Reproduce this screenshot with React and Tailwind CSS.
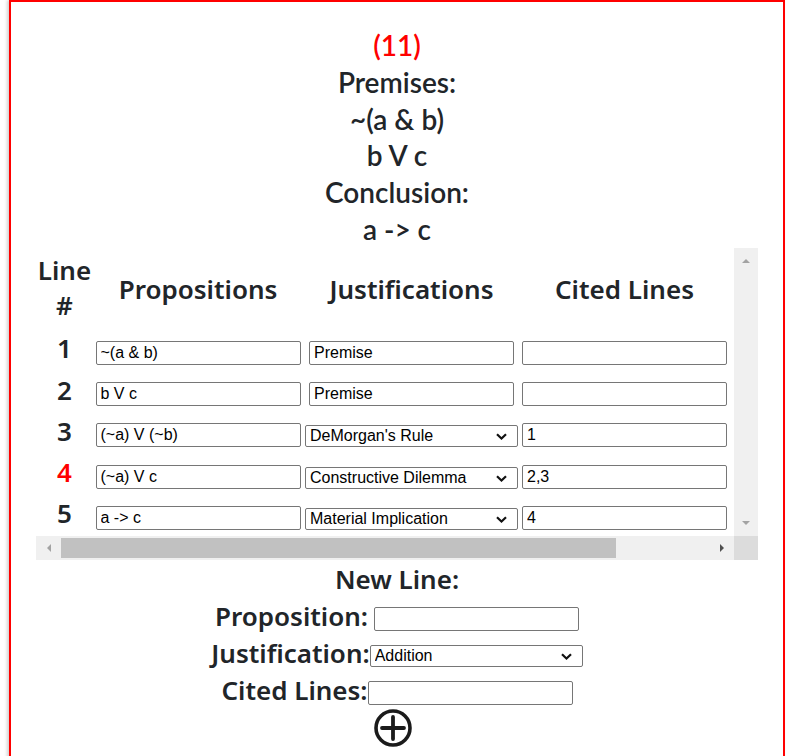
import React from "react";

const rows = [
  { n: "1", prop: "~(a & b)", just: "Premise", cited: "", select: false },
  { n: "2", prop: "b V c", just: "Premise", cited: "", select: false },
  { n: "3", prop: "(~a) V (~b)", just: "DeMorgan's Rule", cited: "1", select: true },
  { n: "4", prop: "(~a) V c", just: "Constructive Dilemma", cited: "2,3", select: true, red: true },
  { n: "5", prop: "a -> c", just: "Material Implication", cited: "4", select: true },
];

const rules = [
  "Premise",
  "Addition",
  "DeMorgan's Rule",
  "Constructive Dilemma",
  "Material Implication",
];

const inputCls =
  "w-[205px] h-[24px] px-[4px] border border-[#767676] rounded-[2px] bg-white text-[16px] font-normal text-black font-['Liberation_Sans',Arial,sans-serif]";

// native-looking select with the chevron drawn on top
const RuleSelect = ({ value }) => (
  <span className="relative inline-flex align-middle">
    <select
      className="appearance-none w-[213px] h-[22px] pl-[4px] pr-[24px] border border-[#767676] rounded-[2px] bg-white text-[16px] leading-[20px] font-normal text-black font-['Liberation_Sans',Arial,sans-serif]"
      defaultValue={value}
    >
      {rules.map((x) => (
        <option key={x}>{x}</option>
      ))}
    </select>
    <svg
      className="pointer-events-none absolute right-[11px] top-[8px]"
      width="11"
      height="7"
      viewBox="0 0 11 7"
      fill="none"
      stroke="#111"
      strokeWidth="2.2"
    >
      <path d="M1 1.2l4.5 4.3L10 1.2" />
    </svg>
  </span>
);

const PlusCircle = () => (
  <svg width="38" height="38" viewBox="0 0 38 38" fill="none" stroke="#1b1b1b">
    <circle cx="19" cy="19" r="17" strokeWidth="3.6" />
    <path d="M19 8v22M8 19h22" strokeWidth="3.8" strokeLinecap="round" />
  </svg>
);

// small triangles used by the scrollbar buttons
const Arrow = ({ dir, color }) => {
  const pts = {
    up: "0,5 4,1 8,5",
    down: "0,1 4,5 8,1",
    left: "5,0 1,4 5,8",
    right: "1,0 5,4 1,8",
  }[dir];
  const vertical = dir === "up" || dir === "down";
  return (
    <svg width={vertical ? 8 : 6} height={vertical ? 6 : 8} viewBox={vertical ? "0 0 8 6" : "0 0 6 8"}>
      <polygon points={pts} fill={color} />
    </svg>
  );
};

export default function App() {
  return (
    <div className="min-h-screen bg-white">
      <div className="ml-[9px] w-[776px] border-2 border-[#ff0000] shadow-[-2px_0_3px_rgba(0,0,0,0.18)] pt-[25px] pb-10 text-[#212529]">
        {/* problem header */}
        <div className="text-center font-['Lato',sans-serif] font-semibold text-[28px] leading-[36.8px]">
          <div className="text-[#ff0000]">(11)</div>
          <div>Premises:</div>
          <div>~(a &amp; b)</div>
          <div>b V c</div>
          <div>Conclusion:</div>
          <div>a -&gt; c</div>
        </div>

        {/* proof table with its scrollbars */}
        <div className="mx-auto w-[722px] h-[312px] grid grid-cols-[698px_24px] grid-rows-[288px_24px]">
          <div className="overflow-hidden">
            <table className="table-fixed border-collapse w-[852px] font-['Noto_Sans',sans-serif]">
              <colgroup>
                <col className="w-[57px]" />
                <col className="w-[210px]" />
                <col className="w-[217px]" />
                <col className="w-[209px]" />
                <col />
              </colgroup>
              <thead>
                <tr className="h-[84px] text-[26px] leading-[35px]">
                  <th className="font-semibold pb-[3px]">Line #</th>
                  <th className="font-semibold pb-[1px]">Propositions</th>
                  <th className="font-semibold pb-[1px]">Justifications</th>
                  <th className="font-semibold pb-[1px]">Cited Lines</th>
                  <th />
                </tr>
              </thead>
              <tbody>
                {rows.map((r) => (
                  <tr key={r.n} className="h-[41.25px]">
                    <td
                      className={`text-center text-[26px] font-semibold leading-none pb-[8px] ${
                        r.red ? "text-[#ff0000]" : ""
                      }`}
                    >
                      {r.n}
                    </td>
                    <td className="text-center">
                      <input className={inputCls} defaultValue={r.prop} />
                    </td>
                    <td className="text-center">
                      {r.select ? (
                        <RuleSelect value={r.just} />
                      ) : (
                        <input className={inputCls} defaultValue={r.just} />
                      )}
                    </td>
                    <td className="text-center">
                      <input className={inputCls} defaultValue={r.cited} />
                    </td>
                    <td />
                  </tr>
                ))}
              </tbody>
            </table>
          </div>
          <div className="bg-[#f0f0f0] flex flex-col items-center justify-between py-[10px]">
            <Arrow dir="up" color="#a3a3a3" />
            <Arrow dir="down" color="#a3a3a3" />
          </div>
          <div className="bg-[#f0f0f0] flex items-center">
            <div className="w-[25px] flex justify-center">
              <Arrow dir="left" color="#a3a3a3" />
            </div>
            <div className="w-[555px] h-[20px] bg-[#c1c1c1]" />
            <div className="flex-1" />
            <div className="w-[25px] flex justify-center">
              <Arrow dir="right" color="#505050" />
            </div>
          </div>
          <div className="bg-[#dcdcdc]" />
        </div>

        {/* new line form */}
        <div className="flex flex-col items-center font-['Noto_Sans',sans-serif] font-semibold text-[26px] leading-[37px] pt-[1px]">
          <div>New Line:</div>
          <div className="flex items-center">
            <span className="mr-[6px]">Proposition:</span>
            <input className={`${inputCls} mt-[6px]`} />
          </div>
          <div className="flex items-center">
            <span>Justification:</span>
            <span className="mt-[6px] flex">
              <RuleSelect value="Addition" />
            </span>
          </div>
          <div className="flex items-center">
            <span>Cited Lines:</span>
            <input className={`${inputCls} mt-[6px]`} />
          </div>
          <button className="mr-[8px] flex items-center justify-center">
            <PlusCircle />
          </button>
        </div>
      </div>
    </div>
  );
}
